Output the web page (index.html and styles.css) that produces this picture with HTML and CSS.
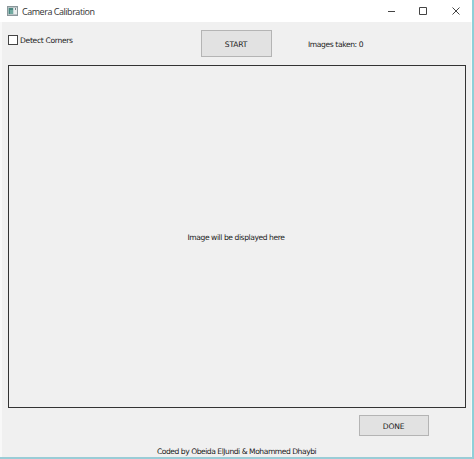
FILE: index.html
```html
<!DOCTYPE html>
<html lang="en">
<head>
<meta charset="utf-8">
<title>Camera Calibration</title>
<link rel="stylesheet" href="styles.css">
</head>
<body>
<div class="window">
  <header class="titlebar">
    <svg class="app-icon" width="11" height="10" viewBox="0 0 11 10"><path fill="#8b979b" d="M0 0h11v10H0z"/><path fill="#e9eeee" d="M1 1.5h9v7H1z"/><path fill="#47857f" d="M1.5 2h4.7v6H1.5z"/><path fill="#71aaa0" d="M3 4h3v4H3z"/><path fill="#718087" d="M8 2h1v2H8z"/></svg>
    <h1 class="title">Camera Calibration</h1>
    <svg class="controls" width="72" height="10" viewBox="0 0 72 10" fill="none" stroke="#444"><path d="M-1 5.5h7M30.500 1.500h7v7h-7z"/><path d="M63.500 1.500l7 7m0-7l-7 7"/></svg>
  </header>
  <main class="content">
    <div class="toolbar">
      <label class="check"><span class="box"></span><span class="detect">Detect Corners</span></label>
      <button class="button start">START</button>
      <span class="count">Images taken: 0</span>
    </div>
    <div class="preview"><span>Image will be displayed here</span></div>
    <button class="button done">DONE</button>
    <footer class="credit">Coded by Obeida ElJundi &amp; Mohammed Dhaybi</footer>
  </main>
</div>
</body>
</html>
```
FILE: styles.css
```css
* { box-sizing: border-box; }
body { margin: 0; background: #f0f0f0; }
.window {
  width: 474px; height: 459px;
  display: flex; flex-direction: column;
  border-right: 2px solid #8fd0d8;
  border-bottom: 2px solid #9accd6;
  background: #f0f0f0;
  font: 7.6px/12px "DejaVu Sans", sans-serif;
  letter-spacing: -0.4px;
  color: #222;
  white-space: nowrap;
}
.titlebar { flex: none; height: 22px; background: #fff; display: flex; align-items: center; padding: 0 11px 0 7px; }
.title { margin: 2px auto 0 4px; font: 9px/14px "Open Sans", sans-serif; letter-spacing: -0.47px; color: #333; }
.controls { overflow: visible; }
.content {
  flex: 1; min-height: 0; display: flex; flex-direction: column;
  padding: 0 6px;
  border-left: 2px solid #f8f8f8;
  border-right: 1px solid #f8f8f8;
}
.toolbar { flex: none; height: 43px; display: flex; align-items: flex-start; }
.check { display: flex; align-items: flex-start; gap: 2px; width: 193px; margin-top: 13px; height: 12px; }
.box { width: 10px; height: 10px; border: 1px solid #444; background: #fff; }
.detect { letter-spacing: -0.32px; }
.button {
  flex: none;
  width: 71px; height: 28px; padding: 2px 1px 0 0;
  border: 1px solid #b4b4b4; background: #e2e2e2;
  font: inherit; color: inherit; letter-spacing: -0.2px;
}
.start { height: 27px; margin-top: 8px; }
.count { margin: 17px 0 0 36px; }
.preview {
  flex: none;
  height: 343px; width: 458px;
  border: 1px solid #333;
  display: flex; align-items: center; justify-content: center;
  padding: 2px 2px 0 0;
  letter-spacing: -0.43px;
}
.done { width: 70px; height: 21px; margin: 7px 0 0 351px; padding-top: 2px; }
.credit { flex: none; margin: 10px 0 0 149px; height: 12px; letter-spacing: -0.47px; }
```
